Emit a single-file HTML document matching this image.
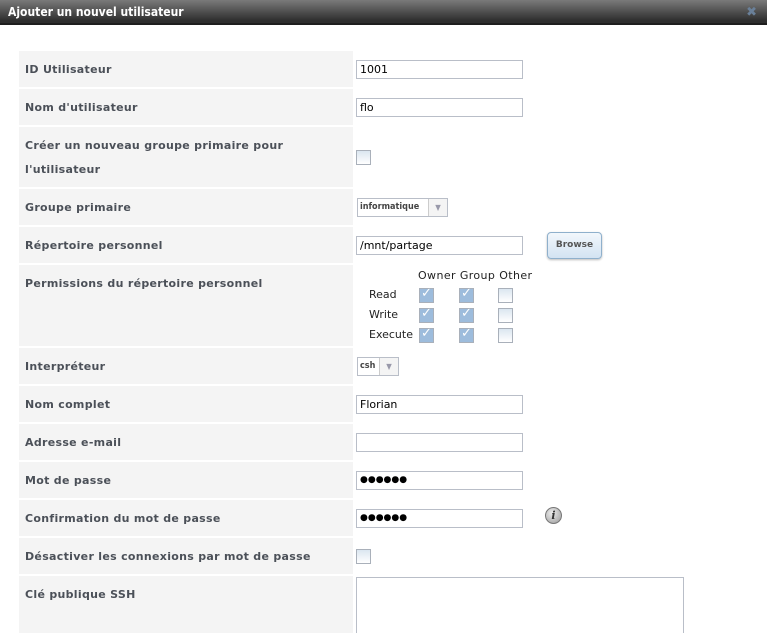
<!DOCTYPE html>
<html><head><meta charset="utf-8"><style>
*{margin:0;padding:0;box-sizing:border-box}
html,body{width:767px;height:633px;overflow:hidden}
body{background:#fff;position:relative;font-family:"DejaVu Sans",Verdana,sans-serif}
.title{position:absolute;left:0;top:0;width:767px;height:25px;background:linear-gradient(#7a7a7a,#2e2e2e 90%);border-bottom:2px solid #1e1e1e;color:#fff;font-weight:bold;font-size:12px;line-height:24px;padding-left:8px;font-family:"DejaVu Sans Condensed","DejaVu Sans",sans-serif}
.x{position:absolute;right:10px;top:1px;color:#6a8099;font-size:13px;font-weight:bold;font-family:"DejaVu Sans",sans-serif}
.row{position:absolute;left:19px;width:334px;background:#f4f4f4;font-size:11px;font-weight:bold;color:#4b5058;padding:7px 6px 0;line-height:24px;letter-spacing:0.3px}
.in{position:absolute;left:356px;width:167px;height:19px;border:1px solid #b9bec8;background:#fff;font-family:"DejaVu Sans",sans-serif;font-size:11px;color:#000;padding-left:3px;line-height:17px}
.cb{position:absolute;width:15px;height:15px;border:1px solid #a9b0ba;background:linear-gradient(#dbe6f0,#fff)}
.ck{background:#9dbcdc}
.ck::after{content:"✓";position:absolute;left:1px;top:-3px;color:#fff;font-size:13px;font-weight:bold}
.sel{position:absolute;border:1px solid #b9bec8;background:#fff;height:19px;font-size:9px;font-weight:bold;color:#444;line-height:17px;padding-left:2px;font-family:"DejaVu Sans Condensed","DejaVu Sans",sans-serif;white-space:nowrap}
.sel span{position:absolute;right:0;top:0;width:19px;height:17px;border-left:1px solid #ccc;background:#f4f4f4;color:#99a;font-size:8px;text-align:center}
.t{position:absolute;font-size:11px;color:#222}
</style></head><body>
<div class="title">Ajouter un nouvel utilisateur<span class="x">✖</span></div>

<div class="row" style="top:51px;height:36px">ID Utilisateur</div>
<div class="row" style="top:89px;height:36px">Nom d'utilisateur</div>
<div class="row" style="top:127px;height:60px">Créer un nouveau groupe primaire pour<br>l'utilisateur</div>
<div class="row" style="top:189px;height:36px">Groupe primaire</div>
<div class="row" style="top:227px;height:36px">Répertoire personnel</div>
<div class="row" style="top:265px;height:81px">Permissions du répertoire personnel</div>
<div class="row" style="top:348px;height:36px">Interpréteur</div>
<div class="row" style="top:386px;height:36px">Nom complet</div>
<div class="row" style="top:424px;height:36px">Adresse e-mail</div>
<div class="row" style="top:462px;height:36px">Mot de passe</div>
<div class="row" style="top:500px;height:36px">Confirmation du mot de passe</div>
<div class="row" style="top:538px;height:36px">Désactiver les connexions par mot de passe</div>
<div class="row" style="top:576px;height:57px">Clé publique SSH</div>

<div class="in" style="top:60px">1001</div>
<div class="in" style="top:98px">flo</div>
<div class="cb" style="left:356px;top:150px"></div>
<div class="sel" style="left:357px;top:198px;width:91px">informatique<span>▼</span></div>
<div class="in" style="top:236px">/mnt/partage</div>
<div style="position:absolute;left:547px;top:232px;width:55px;height:27px;border:1px solid #8fb0cc;border-radius:4px;background:linear-gradient(#f2f7fc,#d3e3f2);font-size:9px;font-weight:bold;color:#555;text-align:center;line-height:24px;box-shadow:0 1px 2px #bbb">Browse</div>

<div class="t" style="left:418px;top:269px;letter-spacing:0.4px">Owner Group Other</div>
<div class="t" style="left:369px;top:288px">Read</div>
<div class="t" style="left:369px;top:308px">Write</div>
<div class="t" style="left:369px;top:328px">Execute</div>
<div class="cb ck" style="left:419px;top:288px"></div><div class="cb ck" style="left:459px;top:288px"></div><div class="cb" style="left:498px;top:288px"></div>
<div class="cb ck" style="left:419px;top:308px"></div><div class="cb ck" style="left:459px;top:308px"></div><div class="cb" style="left:498px;top:308px"></div>
<div class="cb ck" style="left:419px;top:328px"></div><div class="cb ck" style="left:459px;top:328px"></div><div class="cb" style="left:498px;top:328px"></div>

<div class="sel" style="left:357px;top:357px;width:42px">csh<span>▼</span></div>
<div class="in" style="top:395px">Florian</div>
<div class="in" style="top:433px"></div>
<div class="in" style="top:471px;font-size:9px">●●●●●●</div>
<div class="in" style="top:509px;font-size:9px">●●●●●●</div>
<div style="position:absolute;left:545px;top:507px;width:17px;height:17px;border-radius:50%;background:radial-gradient(circle at 40% 35%,#eee,#999);border:1px solid #777;font:italic bold 11px 'DejaVu Serif',serif;color:#333;text-align:center;line-height:15px">i</div>
<div class="cb" style="left:356px;top:549px"></div>
<div style="position:absolute;left:356px;top:577px;width:328px;height:70px;border:1px solid #b9bec8;background:#fff"></div>
</body></html>
